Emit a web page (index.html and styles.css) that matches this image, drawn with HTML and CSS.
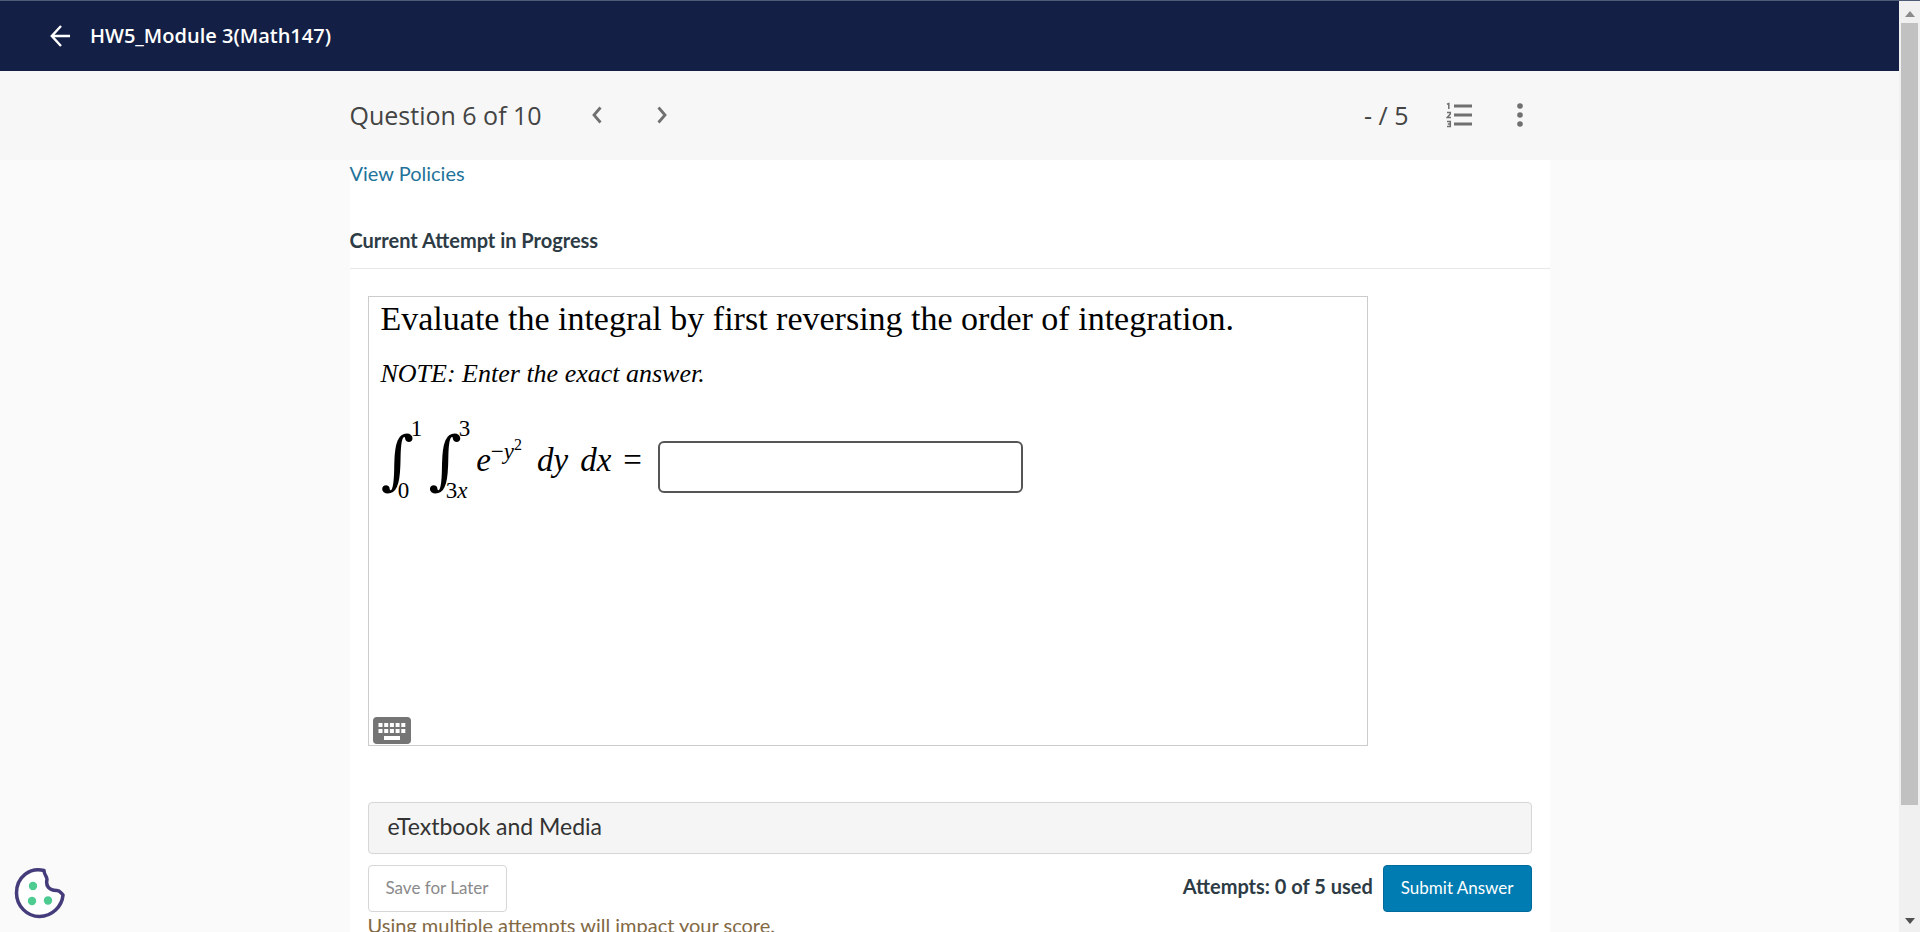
FILE: index.html
```html
<!DOCTYPE html>
<html lang="en">
<head>
    <meta charset="UTF-8">
    <meta name="viewport" content="width=device-width, initial-scale=1.0">
    <title>HW5_Module 3(Math147)</title>
    <link rel="stylesheet" href="styles.css">
</head>
<body>
    <div class="page">
        <header class="top-bar">
            <button class="icon-button back-button" aria-label="Back">
                <svg width="20" height="22" viewBox="0 0 20 22" fill="none" stroke="currentColor" stroke-width="2.4"><path d="M20 11H2M11 1L1.8 11L11 21"/></svg>
            </button>
            <h1>HW5_Module 3(Math147)</h1>
        </header>
        <div class="question-bar">
            <div class="question-bar-inner">
                <h2>Question 6 of 10</h2>
                <nav class="question-nav">
                    <button class="icon-button" aria-label="Previous question">
                        <svg width="10" height="18" viewBox="0 0 10 18" fill="none" stroke="currentColor" stroke-width="2.8"><path d="M8.5 1.5L2 9L8.5 16.5"/></svg>
                    </button>
                    <button class="icon-button" aria-label="Next question">
                        <svg width="10" height="18" viewBox="0 0 10 18" fill="none" stroke="currentColor" stroke-width="2.8"><path d="M1.5 1.5L8 9L1.5 16.5"/></svg>
                    </button>
                </nav>
                <span class="score">- / 5</span>
                <button class="icon-button list-button" aria-label="Question list">
                    <svg width="26" height="26" viewBox="0 0 26 26" fill="none" stroke="currentColor">
                        <path stroke-width="3" d="M8 4H26M8 13H26M8 22H26"/>
                        <path stroke-width="1.5" d="M1 2.2L2.8 1.5V7M1 10.5H4.3V12L1.2 15.5H5M1 19.5H4.3V24.5H1M1.8 22H4.3"/>
                    </svg>
                </button>
                <button class="icon-button" aria-label="More options">
                    <svg width="6" height="26" viewBox="0 0 6 26" fill="currentColor"><circle cx="3" cy="4" r="2.8"/><circle cx="3" cy="13" r="2.8"/><circle cx="3" cy="22" r="2.8"/></svg>
                </button>
            </div>
        </div>
        <main class="content">
            <a class="policies" href="#">View Policies</a>
            <h3>Current Attempt in Progress</h3>
            <div class="question">
                <section class="problem">
                    <p class="prompt">Evaluate the integral by first reversing the order of integration.</p>
                    <p class="note">NOTE: Enter the exact answer.</p>
                    <div class="equation">
                        <label class="math" for="answer">
                            <span class="integral">∫</span>
                            <span class="limits"><span class="upper">1</span><span class="lower">0</span></span>
                            <span class="integral">∫</span>
                            <span class="limits"><span class="upper">3</span><span class="lower">3<i>x</i></span></span>
                            <span class="integrand"><i>e</i><sup>−<i>y</i><sup>2</sup></sup></span>
                            <span class="term"><i>dy</i></span>
                            <span class="term"><i>dx</i></span>
                            <span class="equals">=</span>
                        </label>
                        <input class="answer" id="answer" type="text">
                    </div>
                    <button class="keyboard-button" aria-label="Show keyboard">
                        <svg width="38" height="27" viewBox="0 0 38 27">
                            <rect width="38" height="27" rx="4" fill="#757575"/>
                            <path stroke="#fff" stroke-width="4" stroke-dasharray="4 1.7" d="M5.5 8H32.5M5.5 14H32.5"/>
                            <path fill="#fff" d="M11 19H27V23H11Z"/>
                        </svg>
                    </button>
                </section>
                <button class="media-button">eTextbook and Media</button>
                <div class="actions">
                    <button class="save-button">Save for Later</button>
                    <span class="attempts">Attempts: 0 of 5 used</span>
                    <button class="submit-button">Submit Answer</button>
                </div>
                <p class="warning">Using multiple attempts will impact your score.</p>
            </div>
        </main>
    </div>
    <div class="scrollbar">
        <svg width="10" height="6" viewBox="0 0 10 6"><path fill="#8b8b8b" d="M0 6L5 0L10 6Z"/></svg>
        <div class="track"><div class="thumb"></div></div>
        <svg width="10" height="6" viewBox="0 0 10 6"><path fill="#505050" d="M0 0L5 6L10 0Z"/></svg>
    </div>
    <button class="cookie-button" aria-label="Cookie settings">
        <svg width="52" height="52" viewBox="0 0 52 52">
            <path fill="#fff" stroke="#453c7c" stroke-width="3.5" stroke-linejoin="round" d="M30 3.5C16 0 2.5 10 2.5 26C2.5 39 13 49.5 25.5 49.5C38 49.5 48 39.5 49 28C46.5 25.5 45.5 23 42.5 23.5C35 23.5 31.5 19 33 12.5C33 9 30 8 30 3.5Z"/>
            <g fill="#4dcb91"><circle cx="19" cy="19" r="4.2"/><circle cx="18" cy="34" r="4.2"/><circle cx="34" cy="33.5" r="4.2"/></g>
        </svg>
    </button>
</body>
</html>
```

FILE: styles.css
```css
* {
    box-sizing: border-box;
}

body {
    margin: 0;
    display: flex;
    height: 100vh;
    overflow: hidden;
    background: #fafafa;
    border-top: 1px solid #4f5a75;
    font-family: Lato, sans-serif;
    font-size: 20px;
    line-height: 24px;
    color: #2d3b45;
}

h1, h2, h3, p {
    margin: 0;
}

button {
    font-family: inherit;
    cursor: pointer;
}

.page {
    flex: 1;
    overflow: hidden;
}

/* Header */
.top-bar {
    display: flex;
    align-items: center;
    gap: 20px;
    height: 70px;
    padding-left: 50px;
    background: #131f44;
    color: white;
}

.top-bar h1 {
    font-family: "Open Sans", sans-serif;
    font-size: 20px;
    font-weight: 600;
}

.icon-button {
    display: flex;
    padding: 0;
    border: none;
    background: none;
    color: #707070;
}

.back-button {
    color: white;
}

/* Question bar */
.question-bar {
    background: #f7f7f7;
}

.question-bar-inner {
    display: flex;
    align-items: center;
    max-width: 1200px;
    height: 89px;
    margin: 0 auto;
    padding: 0 27px 2px 0;
    gap: 37px;
    font-family: "Open Sans", sans-serif;
    color: #444;
}

.question-bar h2 {
    font-size: 25px;
    font-weight: 400;
}

.question-nav {
    display: flex;
    gap: 55px;
    padding-left: 13px;
}

.score {
    margin-left: auto;
    font-size: 25px;
}

.list-button {
    margin-right: 8px;
}

/* Content */
.content {
    max-width: 1200px;
    margin: 0 auto;
    background: white;
}

.policies {
    display: block;
    padding-top: 1px;
    color: #1f739b;
    text-decoration: none;
}

.content h3 {
    padding: 43px 0 16px;
    border-bottom: 1px solid #e8e8e8;
    font-size: 20px;
    font-weight: 700;
}

.question {
    padding: 27px 18px 40px;
}

.problem {
    display: flex;
    flex-direction: column;
    max-width: 1000px;
    height: 450px;
    padding: 3px 4px 1px;
    border: 1px solid #ccc;
    font-family: "Liberation Serif", serif;
    color: black;
}

.prompt {
    padding-left: 8px;
    font-size: 34px;
    line-height: 38px;
}

.note {
    padding: 20px 8px 28px;
    font-size: 26px;
    line-height: 32px;
    font-style: italic;
}

.equation {
    display: flex;
    align-items: center;
    gap: 16px;
    padding-left: 8px;
}

.math {
    display: flex;
    align-items: center;
    height: 84px;
    font-size: 33px;
    line-height: 36px;
}

.integral {
    font-family: "DejaVu Serif", serif;
    font-size: 64px;
    font-style: italic;
    line-height: 84px;
}

/* Limits tuck in against the slanted integral sign */
.limits {
    display: flex;
    flex-direction: column;
    justify-content: space-between;
    height: 84px;
    margin-left: -16px;
    font-size: 23px;
    line-height: 22px;
}

.upper {
    padding: 0 6px 0 13px;
}

.integrand {
    padding-right: 15px;
}

.integrand sup {
    font-size: 23px;
    line-height: 0;
}

.integrand sup sup {
    font-size: 16px;
}

.term {
    padding-right: 12px;
}

.answer {
    width: 365px;
    height: 52px;
    margin-top: 14px;
    padding: 0 10px;
    border: 2px solid #555;
    border-radius: 6px;
    font-family: inherit;
    font-size: 26px;
}

.keyboard-button {
    display: flex;
    align-self: flex-start;
    margin-top: auto;
    padding: 0;
    border: none;
    background: none;
}

.media-button {
    display: block;
    width: 100%;
    height: 52px;
    margin-top: 56px;
    padding: 0 19px 4px;
    border: 1px solid #d6d6d6;
    border-radius: 4px;
    background: #f5f5f5;
    color: #333;
    font-size: 23px;
    text-align: left;
}

.actions {
    display: flex;
    align-items: center;
    gap: 10px;
    margin-top: 11px;
}

.actions button {
    height: 47px;
    padding: 0 17px 3px;
    border-radius: 4px;
    font-size: 17px;
}

.actions .save-button {
    border: 1px solid #d6d6d6;
    background: white;
    color: #8a8a8a;
}

.attempts {
    margin-left: auto;
    padding-bottom: 6px;
    font-weight: 700;
}

.actions .submit-button {
    border: 1px solid #006b9a;
    background: #007cb2;
    color: white;
}

.warning {
    padding-top: 1px;
    color: #826944;
}

/* Scrollbar */
.scrollbar {
    display: flex;
    flex-direction: column;
    align-items: center;
    justify-content: space-between;
    gap: 6px;
    width: 21px;
    padding: 10px 1px 8px;
    background: #f0f0f0;
}

.track {
    flex: 1;
    width: 17px;
}

.thumb {
    height: 88%;
    background: #c1c1c1;
}

/* Cookie settings */
.cookie-button {
    position: fixed;
    left: 14px;
    bottom: 13px;
    display: flex;
    padding: 0;
    border: none;
    background: none;
}
```
